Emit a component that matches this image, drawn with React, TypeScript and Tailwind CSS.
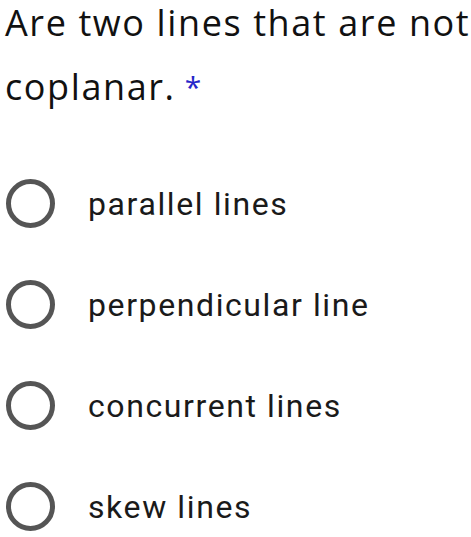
const options = [
  "parallel lines",
  "perpendicular line",
  "concurrent lines",
  "skew lines",
];

export default function App() {
  return (
    <div className="h-[537px] w-[471px] overflow-hidden bg-white">
      <h1
        className="-mt-[9px] pl-[5px] text-[36px] leading-[64px] font-normal tracking-[1.6px] text-[#111111]"
        style={{ fontFamily: '"Open Sans", Arial, sans-serif' }}
      >
        Are two lines that are not coplanar.
        <span className="ml-[9px] align-[2px] text-[30px] text-[#2626c9]">
          *
        </span>
      </h1>

      <div
        className="mt-[60px] flex flex-col gap-[52px]"
        style={{ fontFamily: "Roboto, Arial, sans-serif" }}
      >
        {options.map((option) => (
          <label key={option} className="flex h-[49px] items-center">
            <span className="ml-[6px] h-[49px] w-[49px] shrink-0 rounded-full border-[5px] border-[#555555]" />
            <span className="ml-[33px] text-[32px] tracking-[1.6px] text-[#1a1a1a]">
              {option}
            </span>
          </label>
        ))}
      </div>
    </div>
  );
}
